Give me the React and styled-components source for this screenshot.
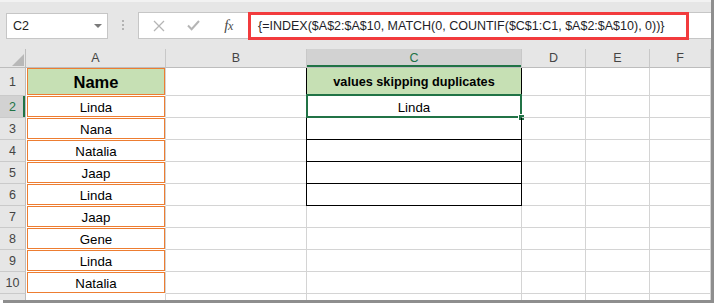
import React from 'react';
import styled, { createGlobalStyle, css } from 'styled-components';

const Global = createGlobalStyle`
  html, body { margin: 0; padding: 0; background: #fff; }
  body { font-family: "Liberation Sans", Arial, sans-serif; }
`;

const GREEN = '#217346';
const HEADER_BG = '#e6e6e6';
const HEADER_SEL = '#d2d2d2';
const GRID = '#d4d4d4';

const Page = styled.div`
  width: 715px;
  height: 303px;
  overflow: hidden;
  background: #fff;
`;

const Window = styled.div`
  width: 711px;
  height: 300px;
  display: flex;
  flex-direction: column;
  background: #fff;
  box-shadow: 3px 0 0 #8e8e8e, 3px 3px 0 #8e8e8e;
  overflow: hidden;
`;

const Toolbar = styled.div`
  flex: none;
  height: 49px;
  box-sizing: border-box;
  background: ${HEADER_BG};
  border-top: 2px solid #f2f2f2;
  padding: 10px 0 0 6px;
  display: flex;
  align-items: flex-start;
`;

const NameBox = styled.div`
  width: 102px;
  height: 26px;
  margin-top: 1px;
  box-sizing: border-box;
  background: #fff;
  border: 1px solid #c6c6c6;
  display: flex;
  align-items: center;
  justify-content: space-between;
  padding: 0 5px 0 6px;
  font-size: 12.5px;
  color: #222;
`;

const Caret = styled.span`
  width: 0;
  height: 0;
  border-left: 4px solid transparent;
  border-right: 4px solid transparent;
  border-top: 4px solid #7a7a7a;
`;

const Grip = styled.div`
  width: 30px;
  height: 26px;
  display: flex;
  flex-direction: column;
  align-items: center;
  justify-content: center;
  gap: 2px;
  span {
    width: 2px;
    height: 2px;
    background: #b3b3b3;
  }
`;

const FormulaBar = styled.div`
  flex: 1;
  height: 27px;
  box-sizing: border-box;
  background: #fff;
  border: 1px solid #c6c6c6;
  border-right: none;
  display: flex;
  align-items: center;
  padding-left: 2px;
`;

const Btn = styled.div`
  width: 35px;
  height: 100%;
  display: flex;
  align-items: center;
  justify-content: center;
`;

const Fx = styled.span`
  font-family: "Liberation Serif", "Times New Roman", serif;
  font-style: italic;
  font-size: 15px;
  color: #4a4a4a;
  letter-spacing: -0.5px;
  small { font-size: 12px; }
`;

const Highlight = styled.div`
  width: 441px;
  height: 28px;
  margin: 0 0 0 2px;
  box-sizing: border-box;
  border: 3px solid #f23b3d;
  display: flex;
  align-items: center;
  padding-left: 7px;
  font-size: 12.5px;
  color: #1e1e28;
  white-space: nowrap;
`;

const Sheet = styled.div`
  flex: 1;
  display: grid;
  grid-template-columns: 26px 140px 141px 215px 64px 64px 1fr;
  grid-template-rows: 19px 28px repeat(9, 22px) 1fr;
`;

const Corner = styled.div`
  background: ${HEADER_BG};
  border-right: 1px solid #bdbdbd;
  border-bottom: 1px solid #bdbdbd;
  display: flex;
  align-items: flex-end;
  justify-content: flex-end;
  padding: 0 1px 1px 0;
  &::after {
    content: '';
    width: 0;
    height: 0;
    border-left: 12px solid transparent;
    border-bottom: 12px solid #b8b8b8;
  }
`;

const ColHeader = styled.div`
  background: ${p => (p.$sel ? HEADER_SEL : HEADER_BG)};
  border-right: 1px solid #c8c8c8;
  border-bottom: 1px solid #bdbdbd;
  display: flex;
  align-items: center;
  justify-content: center;
  font-size: 12.5px;
  color: ${p => (p.$sel ? GREEN : '#444')};
  ${p => p.$sel && css`box-shadow: inset 0 -2px 0 ${GREEN};`}
`;

const RowHeader = styled.div`
  background: ${p => (p.$sel ? HEADER_SEL : HEADER_BG)};
  border-right: 1px solid #bdbdbd;
  border-bottom: ${p => (p.$last ? 'none' : '1px solid #cacaca')};
  display: flex;
  align-items: center;
  justify-content: center;
  font-size: 12.5px;
  padding-top: 1px;
  color: ${p => (p.$sel ? GREEN : '#444')};
  ${p => p.$sel && css`box-shadow: inset -2px 0 0 ${GREEN};`}
`;

const Cell = styled.div`
  position: relative;
  border-right: 1px solid ${GRID};
  border-bottom: ${p => (p.$last ? 'none' : `1px solid ${GRID}`)};
  display: flex;
  align-items: center;
  justify-content: center;
  font-size: 13.3px;
  color: #000;
  padding-top: 1px;
  box-sizing: border-box;
  ${p => p.$fill && css`background: #c6e0b4;`}
  ${p => p.$bold && css`font-weight: bold; font-size: 12.7px;`}
  ${p => p.$boxed && css`
    border-right-color: #000;
    border-bottom-color: #000;
    box-shadow: -1px 0 0 #000;
  `}
`;

const NameCell = styled.div`
  border-right: 1px solid ${GRID};
  border-bottom: ${p => (p.$last ? 'none' : '1px solid #fff')};
  display: flex;
  padding-left: 1px;
`;

const Framed = styled.div`
  flex: 1;
  box-sizing: border-box;
  border: 1px solid #ed7d31;
  background: ${p => (p.$fill ? '#c6e0b4' : '#fff')};
  display: flex;
  align-items: center;
  justify-content: center;
  padding-top: 1px;
  font-size: ${p => (p.$head ? '16.5px' : '13.3px')};
  font-weight: ${p => (p.$head ? 'bold' : 'normal')};
  color: #000;
`;

const Selection = styled.div`
  position: absolute;
  top: -2px;
  left: -1px;
  right: -1px;
  bottom: -1px;
  border: 2px solid ${GREEN};
  pointer-events: none;
`;

const Handle = styled.div`
  position: absolute;
  right: -4px;
  bottom: -4px;
  width: 5px;
  height: 5px;
  background: ${GREEN};
  border: 1px solid #fff;
`;

const XIcon = () => (
  <svg width="12" height="12" viewBox="0 0 12 12">
    <path d="M1 1 L11 11 M11 1 L1 11" stroke="#b5b5b5" strokeWidth="1.3" fill="none" />
  </svg>
);

const CheckIcon = () => (
  <svg width="13" height="11" viewBox="0 0 13 11">
    <path d="M1 5.5 L4.6 9.2 L12 1" stroke="#b5b5b5" strokeWidth="2" fill="none" />
  </svg>
);

const names = ['Linda', 'Nana', 'Natalia', 'Jaap', 'Linda', 'Jaap', 'Gene', 'Linda', 'Natalia'];
const cols = ['A', 'B', 'C', 'D', 'E', 'F'];

export default function App() {
  const rows = [];
  rows.push(
    <React.Fragment key="r1">
      <RowHeader>1</RowHeader>
      <NameCell><Framed $fill $head>Name</Framed></NameCell>
      <Cell />
      <Cell $fill $bold $boxed>values skipping duplicates</Cell>
      <Cell />
      <Cell />
      <Cell />
    </React.Fragment>
  );
  names.forEach((n, i) => {
    const r = i + 2;
    rows.push(
      <React.Fragment key={r}>
        <RowHeader $sel={r === 2}>{r}</RowHeader>
        <NameCell><Framed>{n}</Framed></NameCell>
        <Cell />
        <Cell $boxed={r <= 6}>
          {r === 2 && (
            <>
              Linda
              <Selection />
              <Handle />
            </>
          )}
        </Cell>
        <Cell />
        <Cell />
        <Cell />
      </React.Fragment>
    );
  });
  rows.push(
    <React.Fragment key="r11">
      <RowHeader $last />
      <NameCell $last />
      <Cell $last />
      <Cell $last />
      <Cell $last />
      <Cell $last />
      <Cell $last />
    </React.Fragment>
  );

  return (
    <Page>
      <Global />
      <Window>
        <Toolbar>
          <NameBox>
            C2
            <Caret />
          </NameBox>
          <Grip><span /><span /><span /></Grip>
          <FormulaBar>
            <Btn><XIcon /></Btn>
            <Btn><CheckIcon /></Btn>
            <Btn><Fx>f<small>x</small></Fx></Btn>
            <Highlight>{'{=INDEX($A$2:$A$10, MATCH(0, COUNTIF($C$1:C1, $A$2:$A$10), 0))}'}</Highlight>
          </FormulaBar>
        </Toolbar>
        <Sheet>
          <Corner />
          {cols.map(c => (
            <ColHeader key={c} $sel={c === 'C'}>{c}</ColHeader>
          ))}
          {rows}
        </Sheet>
      </Window>
    </Page>
  );
}
